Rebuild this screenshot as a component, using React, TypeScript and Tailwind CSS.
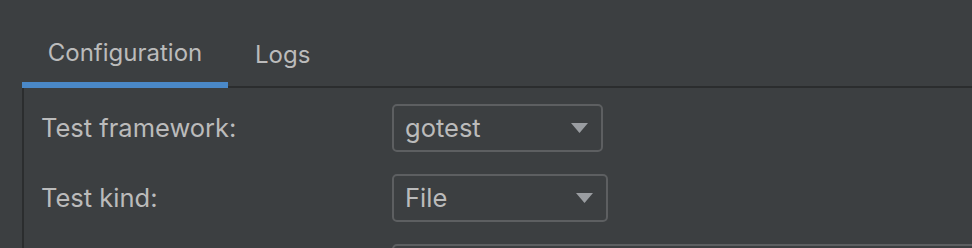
import React from "react";

function Caret() {
  return (
    <svg width="17" height="10" viewBox="0 0 17 10" className="shrink-0">
      <path d="M0 0 H17 L8.5 10 Z" fill="#9a9da1" />
    </svg>
  );
}

function Combo({ value, width }: { value: string; width: string }) {
  return (
    <div
      className={`flex h-[48px] ${width} items-center justify-between rounded-[5px] border-2 border-[#5d5f61] bg-[#3c3f41] pl-[11px] pr-[13px] text-[25.5px] text-[#bbbbbb]`}
    >
      <span>{value}</span>
      <Caret />
    </div>
  );
}

export default function App() {
  return (
    <div
      className="h-[248px] w-[972px] overflow-hidden bg-[#3c3f41] text-[#bbbbbb]"
      style={{ fontFamily: "Inter, 'Noto Sans', sans-serif" }}
    >
      {/* tab strip */}
      <div className="flex h-[88px] items-end pl-[22px]">
        <div className="flex h-[64px] w-[206px] flex-col">
          <div className="flex flex-1 items-center justify-center text-[24px]">Configuration</div>
          <div className="h-[6px] bg-[#4a88c7]" />
        </div>
        <div className="flex h-[64px] flex-1 flex-col">
          <div className="flex flex-1 items-center pl-[27px] text-[24px]">Logs</div>
          <div className="h-[2px] bg-[#2b2d2e]" />
        </div>
      </div>

      {/* panel */}
      <div className="ml-[22px] h-[160px] border-l-2 border-[#2b2d2e] pl-[17px] pt-[16px]">
        <div className="flex flex-col gap-[22px]">
          <div className="flex items-center">
            <div className="w-[351px] text-[25.5px]">Test framework:</div>
            <Combo value="gotest" width="w-[211px]" />
          </div>
          <div className="flex items-center">
            <div className="w-[351px] text-[25.5px]">Test kind:</div>
            <Combo value="File" width="w-[216px]" />
          </div>
          <div className="flex">
            <div className="w-[351px] shrink-0" />
            <div className="h-[48px] w-[700px] shrink-0 rounded-[5px] border-2 border-[#5d5f61]" />
          </div>
        </div>
      </div>
    </div>
  );
}
